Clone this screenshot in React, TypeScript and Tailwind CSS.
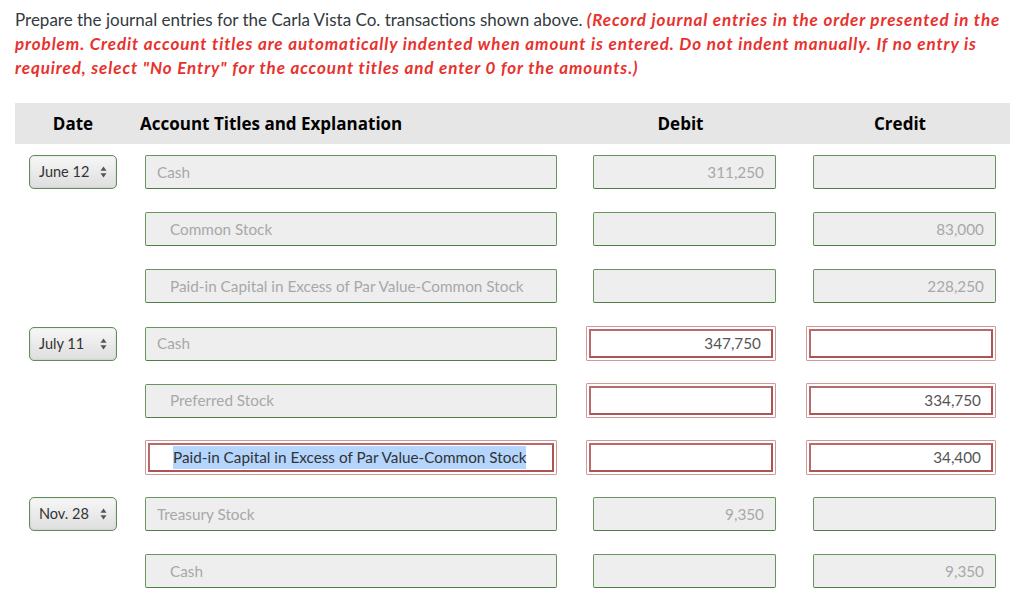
import React from 'react';

type Cell = { text: string; red?: boolean };

interface JournalRow {
  date?: string;
  account: string;
  credit?: boolean; // indented account title
  debit: Cell;
  creditAmt: Cell;
  accountRed?: boolean;
}

const rows: JournalRow[] = [
  { date: 'June 12', account: 'Cash', debit: { text: '311,250' }, creditAmt: { text: '' } },
  { account: 'Common Stock', credit: true, debit: { text: '' }, creditAmt: { text: '83,000' } },
  { account: 'Paid-in Capital in Excess of Par Value-Common Stock', credit: true, debit: { text: '' }, creditAmt: { text: '228,250' } },
  { date: 'July 11', account: 'Cash', debit: { text: '347,750', red: true }, creditAmt: { text: '', red: true } },
  { account: 'Preferred Stock', credit: true, debit: { text: '', red: true }, creditAmt: { text: '334,750', red: true } },
  {
    account: 'Paid-in Capital in Excess of Par Value-Common Stock',
    credit: true,
    accountRed: true,
    debit: { text: '', red: true },
    creditAmt: { text: '34,400', red: true },
  },
  { date: 'Nov. 28', account: 'Treasury Stock', debit: { text: '9,350' }, creditAmt: { text: '' } },
  { account: 'Cash', credit: true, debit: { text: '' }, creditAmt: { text: '9,350' } },
];

const SelectArrows = () => (
  <svg width="7" height="12" viewBox="0 0 7 12" className="shrink-0">
    <path d="M3.5 0.5 L6.5 4.8 L0.5 4.8 Z" fill="#555" />
    <path d="M3.5 11.5 L6.5 7.2 L0.5 7.2 Z" fill="#555" />
  </svg>
);

const DateSelect = ({ label }: { label: string }) => (
  <div className="flex h-[34px] w-[88px] items-center justify-between rounded-[5px] border border-[#5f8f57] bg-gradient-to-b from-[#f7f7f7] to-[#dedede] pl-[9px] pr-[9px] text-[14.5px] text-[#333] shadow-[inset_0_0_2px_rgba(0,0,0,0.15)]">
    <span>{label}</span>
    <SelectArrows />
  </div>
);

const GreenBox = ({ children, className = '' }: { children?: React.ReactNode; className?: string }) => (
  <div
    className={`flex h-[34px] items-center rounded-[2px] border border-[#68945f] border-b-[#4f7f47] bg-[#eeeeee] text-[15.3px] text-[#a8a8a8] ${className}`}
  >
    {children}
  </div>
);

const RedBox = ({ children, className = '' }: { children?: React.ReactNode; className?: string }) => (
  <div className={`h-[35px] rounded-[1px] border border-[#cf9a9a] bg-white p-[2px] ${className}`}>
    <div className="flex h-full items-center border-2 border-[#ad5454] border-t-[#b86a6a] border-l-[#b86a6a] bg-white text-[15.3px] text-[#555]">
      {children}
    </div>
  </div>
);

const AmountCell = ({ cell }: { cell: Cell }) =>
  cell.red ? (
    <RedBox className="w-[190px]">
      <span className="ml-auto pr-[10px]">{cell.text}</span>
    </RedBox>
  ) : (
    <GreenBox className="w-[183px] justify-end pr-[11px]">{cell.text}</GreenBox>
  );

export default function App() {
  return (
    <div className="h-[609px] w-[1024px] overflow-hidden bg-white font-['Lato','Noto_Sans',sans-serif]">
      <p className="px-[15px] pt-[8px] text-[17px] leading-[24px] text-[#333a40]">
        Prepare the journal entries for the Carla Vista Co. transactions shown above.{' '}
        <span className="font-bold italic tracking-[0.9px] text-[#e8322e]">
          (Record journal entries in the order presented in the problem. Credit account titles are automatically
          indented when amount is entered. Do not indent manually. If no entry is required, select "No Entry" for the
          account titles and enter 0 for the amounts.)
        </span>
      </p>

      <div className="ml-[15px] mt-[23px] w-[995px]">
        <div className="grid h-[41px] grid-cols-[116px_440px_219px_220px] items-center bg-[#e6e6e6] font-['Open_Sans',sans-serif] text-[17px] font-bold text-black">
          <div className="text-center">Date</div>
          <div className="pl-[9px]">Account Titles and Explanation</div>
          <div className="text-center">Debit</div>
          <div className="text-center">Credit</div>
        </div>

        <div className="mt-[11px] flex flex-col gap-[23px]">
          {rows.map((r, i) => (
            <div key={i} className="grid h-[34px] grid-cols-[116px_440px_219px_220px] items-center">
              <div className="flex justify-center">{r.date && <DateSelect label={r.date} />}</div>
              <div className="flex justify-center">
                {r.accountRed ? (
                  <RedBox className="w-[412px]">
                    <span className="ml-[23px] bg-[#b4d5fd] text-[#333]">{r.account}</span>
                  </RedBox>
                ) : (
                  <GreenBox className={`w-[412px] ${r.credit ? 'pl-[24px]' : 'pl-[11px]'}`}>{r.account}</GreenBox>
                )}
              </div>
              <div className="flex justify-end pr-[14px]">
                <AmountCell cell={r.debit} />
              </div>
              <div className="flex justify-end pr-[14px]">
                <AmountCell cell={r.creditAmt} />
              </div>
            </div>
          ))}
        </div>
      </div>
    </div>
  );
}
